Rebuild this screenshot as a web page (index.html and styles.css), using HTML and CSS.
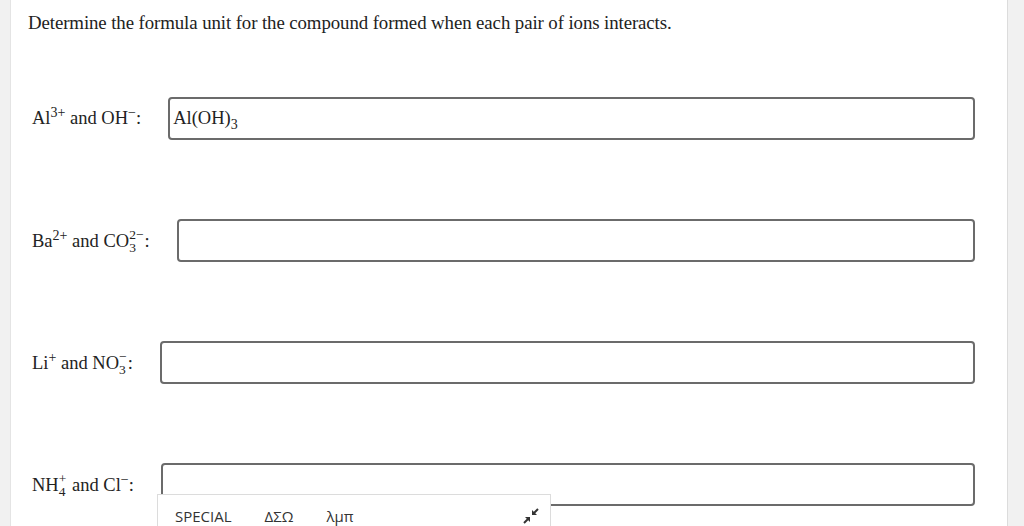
FILE: index.html
```html
<!DOCTYPE html>
<html lang="en">
<head>
    <meta charset="UTF-8">
    <meta name="viewport" content="width=device-width, initial-scale=1.0">
    <title>Formula Units</title>
    <link rel="stylesheet" href="styles.css">
</head>
<body>
    <div class="page">
        <p class="question">Determine the formula unit for the compound formed when each pair of ions interacts.</p>

        <div class="rows">
            <div class="row">
                <label class="ion-label">Al<sup>3+</sup> and OH<sup>&minus;</sup>:</label>
                <div class="answer">Al(OH)<sub>3</sub></div>
            </div>

            <div class="row">
                <label class="ion-label">Ba<sup>2+</sup> and CO<span class="supsub"><span>2&minus;</span><span>3</span></span>:</label>
                <div class="answer"></div>
            </div>

            <div class="row">
                <label class="ion-label">Li<sup>+</sup> and NO<span class="supsub"><span>&minus;</span><span>3</span></span>:</label>
                <div class="answer"></div>
            </div>

            <div class="row">
                <label class="ion-label">NH<span class="supsub"><span>+</span><span>4</span></span> and Cl<sup>&minus;</sup>:</label>
                <div class="answer"></div>
            </div>
        </div>

        <!-- Symbol toolbar -->
        <div class="toolbar">
            <span class="tool">SPECIAL</span>
            <span class="tool">&Delta;&Sigma;&Omega;</span>
            <span class="tool">&lambda;&mu;&pi;</span>
            <svg class="collapse" width="16" height="16" viewBox="0 0 16 16">
                <path d="M15 1 L10 6" stroke="#333" stroke-width="2"/>
                <path d="M9 2 L9 7 L14 7 Z" fill="#333"/>
                <path d="M1 15 L6 10" stroke="#333" stroke-width="2"/>
                <path d="M7 14 L7 9 L2 9 Z" fill="#333"/>
            </svg>
        </div>
    </div>
</body>
</html>
```

FILE: styles.css
```css
/* General Styles */
body {
    margin: 0;
    background-color: #f1f1f1;
    font-family: 'Liberation Serif', 'Times New Roman', serif;
    color: #222;
    overflow: hidden;
}

.page {
    position: relative;
    margin-left: 10px;
    width: 998px;
    height: 526px;
    background-color: #fff;
    border-left: 1px solid #e4e4e4;
    border-right: 1px solid #dcdcdc;
    padding: 12px 32px 0 17px;
    box-sizing: border-box;
}

.question {
    margin: 0;
    font-size: 18.85px;
    line-height: 22px;
    letter-spacing: -0.1px;
}

/* Answer rows */
.rows {
    display: flex;
    flex-direction: column;
    gap: 79px;
    margin-top: 63px;
    padding-left: 4px;
}

.row {
    display: flex;
    align-items: center;
    gap: 27px;
}

.ion-label {
    font-size: 18.5px;
    white-space: nowrap;
}

sup, sub {
    font-size: 14px;
    line-height: 0;
}

.supsub {
    display: inline-flex;
    flex-direction: column;
    vertical-align: 8px;
    font-size: 13.5px;
    line-height: 13px;
    margin-right: 1px;
}

.answer {
    flex: 1;
    height: 43px;
    border: 2px solid #6b6b6b;
    border-radius: 4px;
    box-sizing: border-box;
    padding: 7px 3px;
    font-size: 18.5px;
    line-height: 24px;
}

/* Symbol toolbar */
.toolbar {
    position: absolute;
    left: 146px;
    top: 494px;
    width: 394px;
    height: 44px;
    background-color: #fff;
    border: 1px solid #dcdcdc;
    box-sizing: border-box;
    display: flex;
    align-items: center;
    padding: 0 0 0 17px;
    gap: 33px;
    font-family: 'Open Sans', sans-serif;
    font-size: 15px;
    color: #333;
}

.collapse {
    margin-left: auto;
    margin-right: 11px;
}
```
